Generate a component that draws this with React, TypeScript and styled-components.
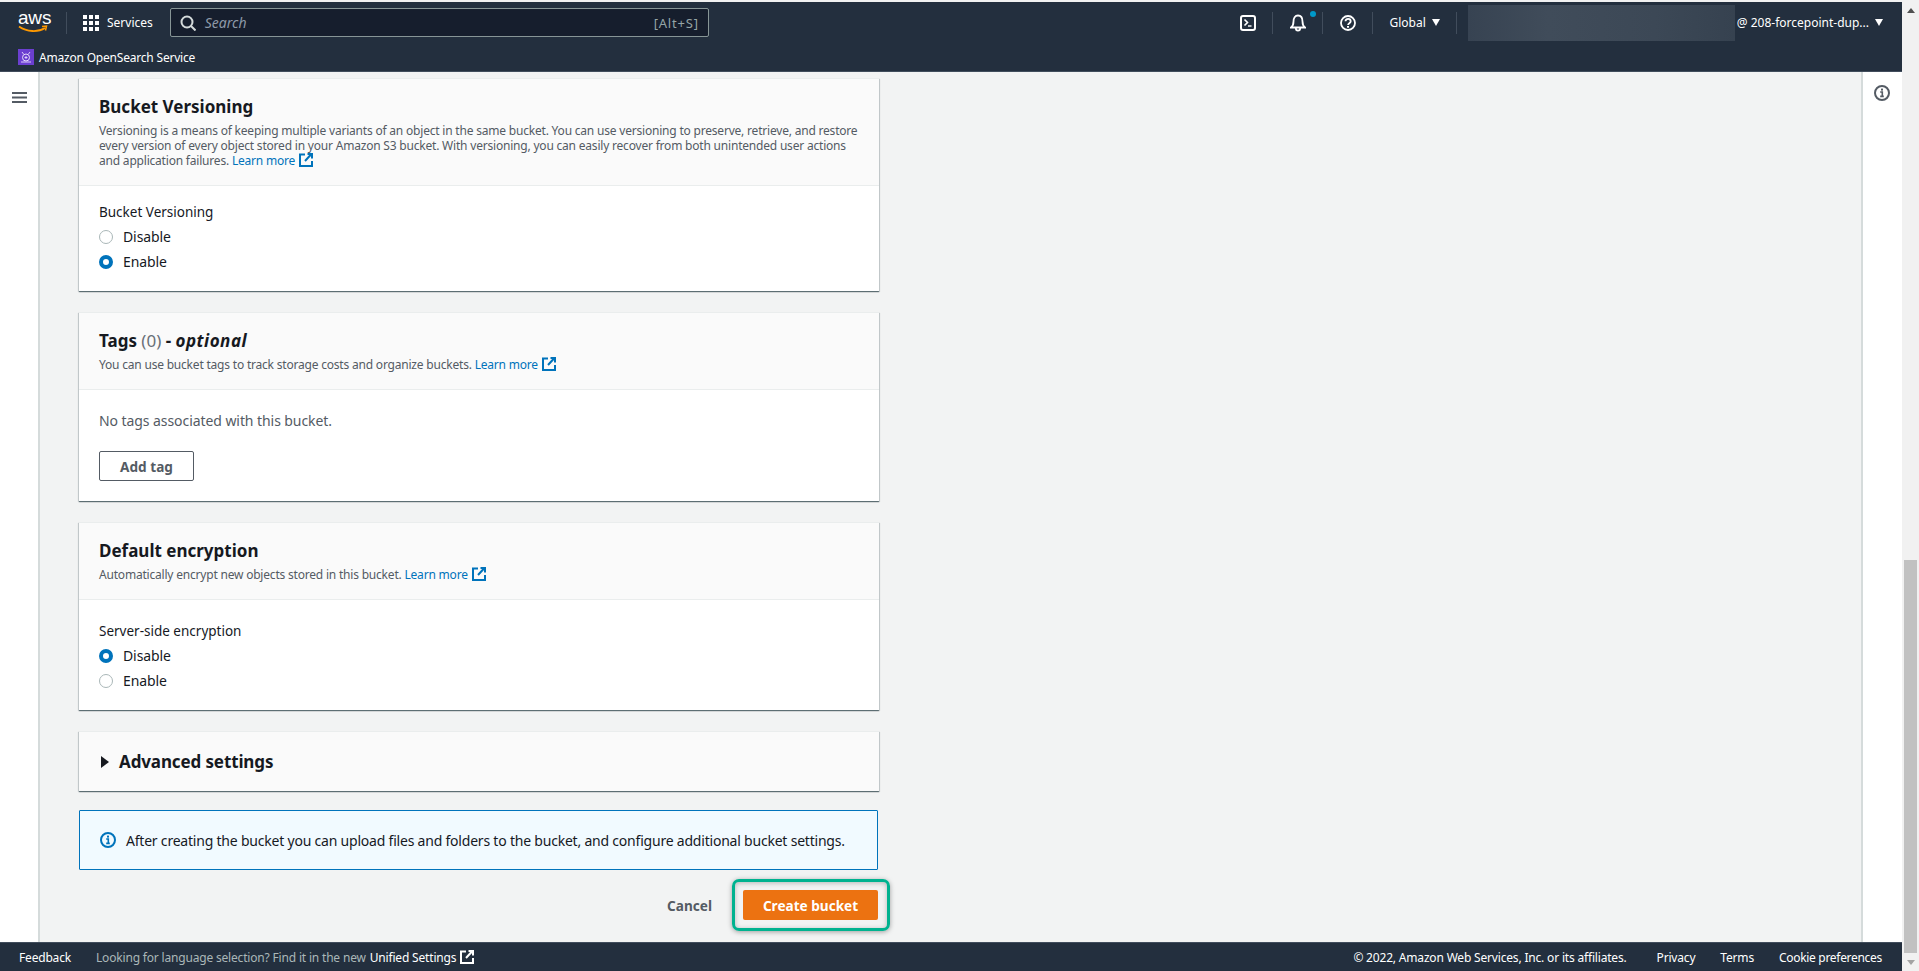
import React from "react";
import styled, { createGlobalStyle } from "styled-components";

const Global = createGlobalStyle`
  html, body { margin: 0; padding: 0; height: 100%; overflow: hidden; background: #f1f1f1; }
  #root { height: 100%; }
  * { box-sizing: border-box; }
  body { font-family: "Noto Sans", "Open Sans", Arial, sans-serif; color: #16191f; font-size: 14px; }
`;

const Shell = styled.div`
  display: flex;
  width: 1919px;
  height: 971px;
  overflow: hidden;
`;
const Page = styled.div`
  width: 1902px;
  height: 971px;
  display: flex;
  flex-direction: column;
`;
const Header = styled.header`
  height: 70px;
  margin-top: 2px;
  flex: none;
  background: #232f3e;
  border-bottom: 1px solid #414d5c;
  color: #fff;
`;
const TopRow = styled.div`
  height: 41px;
  display: flex;
  align-items: center;
  padding: 0 19px 0 18px;
`;
const ServiceRow = styled.div`
  height: 28px;
  display: flex;
  align-items: center;
  padding: 0 18px;
  gap: 5px;
  font-size: 12px;
  letter-spacing: -0.2px;
`;
const LogoBox = styled.div`
  width: 30px;
  height: 26px;
  position: relative;
  margin-right: 18px;
  flex: none;
`;
const LogoWord = styled.span`
  display: block;
  font-family: "Liberation Sans", Arial, sans-serif;
  font-size: 19px;
  line-height: 16px;
  letter-spacing: -0.2px;
  text-align: center;
  color: #fff;
`;
const Smile = styled.svg`
  position: absolute;
  left: 0;
  top: 15px;
`;
const Divider = styled.div`
  width: 1px;
  height: 22px;
  background: #414d5c;
  flex: none;
`;
const ServicesBtn = styled.div`
  display: flex;
  align-items: center;
  gap: 8px;
  margin-left: 16px;
  font-size: 12px;
  flex: none;
`;
const SearchBox = styled.div`
  width: 539px;
  height: 29px;
  margin-left: 17px;
  background: #161e2d;
  border: 1px solid #879596;
  border-radius: 2px;
  display: flex;
  align-items: center;
  padding: 0 9px 0 9px;
  gap: 9px;
  font-size: 14px;
  flex: none;
`;
const SearchText = styled.span`
  font-style: italic;
  color: #8d99a8;
  flex: 1;
`;
const Shortcut = styled.span`
  color: #95a5a6;
  font-size: 13px;
  letter-spacing: 0.8px;
`;
const RightGroup = styled.div`
  margin-left: auto;
  display: flex;
  align-items: center;
`;
const TerminalIcon = styled.svg`
  margin-right: 16px;
  flex: none;
`;
const Segment = styled.div`
  position: relative;
  display: flex;
  align-items: center;
  gap: 6px;
  padding: 0 16px 0 17px;
  font-size: 12px;
`;
const NotifyDot = styled.span`
  position: absolute;
  left: 37px;
  top: -3px;
  width: 6px;
  height: 6px;
  border-radius: 50%;
  background: #0099c9;
`;
const Redacted = styled.div`
  width: 267px;
  height: 36px;
  margin-left: 11px;
  background: linear-gradient(90deg, #374352, #404c5a 30%, #3c4856 70%, #364250);
`;
const Account = styled.div`
  display: flex;
  align-items: center;
  gap: 6px;
  margin-left: 2px;
  font-size: 12px;
  white-space: nowrap;
`;
const Caret = styled.span`
  width: 0;
  height: 0;
  border-left: 4.5px solid transparent;
  border-right: 4.5px solid transparent;
  border-top: 7px solid #fff;
`;
const Middle = styled.div`
  flex: 1;
  min-height: 0;
  display: flex;
  background: #f2f3f3;
`;
const NavRail = styled.div`
  width: 40px;
  flex: none;
  background: #fff;
  border-right: 2px solid #d5dbdb;
  padding: 16px 0 0 12px;
`;
const Main = styled.main`
  flex: 1;
  padding: 6px 0 0 39px;
  display: flex;
  flex-direction: column;
`;
const InfoRail = styled.div`
  width: 41px;
  flex: none;
  background: #fff;
  border-left: 2px solid #d5dbdb;
  padding: 13px 0 0 11px;
`;
const Card = styled.section<{ $mb?: number }>`
  width: 800px;
  background: #fff;
  flex: none;
  margin-bottom: ${(p) => p.$mb ?? 21}px;
  border-top: 1px solid #eaeded;
  box-shadow: 0 1px 1px 0 rgba(0, 28, 36, 0.5), 1px 1px 1px 0 rgba(0, 28, 36, 0.12), -1px 1px 1px 0 rgba(0, 28, 36, 0.12);
`;
const CardHead = styled.div`
  background: #fafafa;
  border-bottom: 1px solid #eaeded;
  padding: 17px 20px 17px;
`;
const Title = styled.h2`
  margin: 0;
  font-size: 17px;
  line-height: 22px;
  font-weight: 700;
  color: #16191f;
`;
const Count = styled.span`
  font-weight: 400;
  color: #687078;
`;
const Optional = styled.em`
  letter-spacing: 0.5px;
`;
const Desc = styled.p`
  margin: 5px 0 0;
  font-size: 12px;
  letter-spacing: -0.2px;
  line-height: 15px;
  color: #545b64;
`;
const Learn = styled.a`
  color: #0073bb;
`;
const Ext = styled.svg`
  vertical-align: -2px;
  margin-left: 4px;
`;
const InfoSvg = styled.svg`
  flex: none;
`;
const CardBody = styled.div<{ $top: number; $bottom: number }>`
  padding: ${(p) => p.$top}px 20px ${(p) => p.$bottom}px;
`;
const FieldLabel = styled.div`
  height: 25px;
  line-height: 27px;
  font-size: 13.5px;
  color: #16191f;
`;
const RadioRow = styled.label`
  height: 25px;
  display: flex;
  align-items: center;
  gap: 10px;
  font-size: 14px;
  letter-spacing: -0.1px;
  color: #16191f;
`;
const RadioDot = styled.span<{ $on?: boolean }>`
  width: 14px;
  height: 14px;
  border-radius: 50%;
  background: #fff;
  border: ${(p) => (p.$on ? "4px solid #0073bb" : "1px solid #aab7b8")};
  flex: none;
`;
const Empty = styled.div`
  font-size: 14px;
  letter-spacing: -0.07px;
  line-height: 20px;
  color: #545b64;
`;
const OutlineBtn = styled.button`
  display: block;
  margin-top: 20px;
  width: 95px;
  height: 30px;
  padding: 0;
  background: #fff;
  border: 1px solid #545b64;
  border-radius: 2px;
  font: 700 13.6px "Noto Sans", sans-serif;
  color: #545b64;
`;
const AdvancedRow = styled.div`
  height: 59px;
  background: #fafafa;
  display: flex;
  align-items: center;
  padding-left: 22px;
  gap: 10px;
  font-size: 17px;
  letter-spacing: -0.12px;
  font-weight: 700;
  color: #16191f;
`;
const CaretRight = styled.span`
  width: 0;
  height: 0;
  border-top: 6px solid transparent;
  border-bottom: 6px solid transparent;
  border-left: 8px solid #16191f;
`;
const Alert = styled.div`
  width: 799px;
  height: 60px;
  flex: none;
  background: #f1faff;
  border: 1px solid #0073bb;
  border-radius: 1px;
  display: flex;
  align-items: center;
  padding-left: 20px;
  gap: 10px;
  font-size: 14px;
  letter-spacing: -0.21px;
  color: #16191f;
`;
const Actions = styled.div`
  width: 799px;
  margin-top: 20px;
  display: flex;
  justify-content: flex-end;
  align-items: center;
  gap: 31px;
`;
const CancelBtn = styled.button`
  background: none;
  border: 0;
  padding: 0;
  font: 700 13.6px "Noto Sans", sans-serif;
  color: #545b64;
`;
const PrimaryWrap = styled.div`
  position: relative;
  &::after {
    content: "";
    position: absolute;
    inset: -11px -12px -11px -11px;
    border: 3px solid #00b28f;
    border-radius: 7px;
    box-shadow: 0 1px 5px rgba(0, 0, 0, 0.35), inset 0 1px 5px rgba(0, 0, 0, 0.25);
    pointer-events: none;
  }
`;
const PrimaryBtn = styled.button`
  display: block;
  width: 135px;
  height: 30px;
  padding: 0;
  background: #ec7211;
  border: 0;
  border-radius: 2px;
  color: #fff;
  font: 700 13.6px "Noto Sans", sans-serif;
`;
const Footer = styled.footer`
  height: 29px;
  flex: none;
  background: #232f3e;
  border-top: 1px solid #414d5c;
  display: flex;
  align-items: center;
  padding: 0 20px 0 19px;
  font-size: 12px;
  letter-spacing: -0.18px;
  color: #fff;
`;
const FooterMuted = styled.span`
  color: #aab7b8;
  margin-left: 25px;
  margin-right: 4px;
`;
const FooterRight = styled.div`
  margin-left: auto;
  display: flex;
  align-items: center;
  gap: 25px;
`;
const Copyright = styled.span`
  margin-right: 5px;
`;
const CookieLink = styled.span`
  letter-spacing: -0.3px;
`;
const Scrollbar = styled.div`
  width: 17px;
  height: 971px;
  flex: none;
  background: #f1f1f1;
  display: flex;
  flex-direction: column;
  align-items: center;
  padding-top: 8px;
`;
const ArrowUp = styled.span`
  width: 0;
  height: 0;
  border-left: 4px solid transparent;
  border-right: 4px solid transparent;
  border-bottom: 5px solid #505050;
`;
const Thumb = styled.div`
  width: 13px;
  height: 393px;
  margin-top: 547px;
  background: #c1c1c1;
`;
const ArrowDown = styled.span`
  width: 0;
  height: 0;
  margin-top: 7px;
  border-left: 4px solid transparent;
  border-right: 4px solid transparent;
  border-top: 5px solid #a3a3a3;
`;

const ExtIcon = ({ color = "#0073bb" }: { color?: string }) => (
  <Ext width="14" height="14" viewBox="0 0 14 14" fill="none" stroke={color} strokeWidth="2">
    <path d="M6 1.5H1v11.5h12V8" />
    <path d="M6 8l6-6.5M8.5 1H13v4.5" />
  </Ext>
);

const InfoIcon = ({ color, size = 16 }: { color: string; size?: number }) => (
  <InfoSvg width={size} height={size} viewBox="0 0 16 16" fill="none">
    <circle cx="8" cy="8" r="7" stroke={color} strokeWidth="2" />
    <rect x="7" y="3.6" width="2" height="2" fill={color} />
    <path d="M6.2 7h2.1v4M6.2 11.4h3.6" stroke={color} strokeWidth="1.6" />
  </InfoSvg>
);

const AppGrid = () => (
  <svg width="16" height="16" viewBox="0 0 16 16" fill="#fff">
    {[0, 6, 12].flatMap((y) =>
      [0, 6, 12].map((x) => <rect key={`${x}-${y}`} x={x} y={y} width="4" height="4" />)
    )}
  </svg>
);

export default function App() {
  return (
    <>
      <Global />
      <Shell>
        <Page>
          <Header>
            <TopRow>
              <LogoBox>
                <LogoWord>aws</LogoWord>
                <Smile width="30" height="10" viewBox="0 0 30 10" fill="none">
                  <path d="M1 1.5C9 7 20 7.5 27 3" stroke="#f90" strokeWidth="1.8" />
                  <path d="M24 1.5l4.5-.5-1 4.5" stroke="#f90" strokeWidth="1.5" />
                </Smile>
              </LogoBox>
              <Divider />
              <ServicesBtn>
                <AppGrid />
                Services
              </ServicesBtn>
              <SearchBox>
                <svg width="16" height="16" viewBox="0 0 16 16" fill="none" stroke="#d5dbdb" strokeWidth="2">
                  <circle cx="7" cy="7" r="5.5" />
                  <path d="M11 11l4.5 4.5" />
                </svg>
                <SearchText>Search</SearchText>
                <Shortcut>[Alt+S]</Shortcut>
              </SearchBox>
              <RightGroup>
                <TerminalIcon width="16" height="16" viewBox="0 0 16 16" fill="none" stroke="#fff" strokeWidth="2">
                  <rect x="1" y="1" width="14" height="14" rx="2" />
                  <path d="M4.5 4.5l3 3-3 3" strokeWidth="1.6" />
                  <path d="M8 11h3.5" strokeWidth="1.4" />
                </TerminalIcon>
                <Divider />
                <Segment>
                  <svg width="16" height="18" viewBox="0 0 16 18" fill="none" stroke="#fff" strokeWidth="1.8">
                    <path d="M1 13.5c2-1.5 2.5-3 2.5-6C3.500 4 5 1.500 8 1.500s4.500 2.500 4.500 6c0 3 .5 4.500 2.500 6z" />
                    <path d="M5.800 14c0 3.500 4.400 3.500 4.400 0" />
                  </svg>
                  <NotifyDot />
                </Segment>
                <Divider />
                <Segment>
                  <svg width="16" height="16" viewBox="0 0 16 16" fill="none" stroke="#fff" strokeWidth="1.8">
                    <circle cx="8" cy="8" r="7" />
                    <path d="M5.500 6.300c0-3.300 5.200-3.300 5.200 0 0 2-2.600 1.900-2.600 3.700" />
                    <path d="M7 11.800h2" strokeWidth="1.800" />
                  </svg>
                </Segment>
                <Divider />
                <Segment>
                  Global
                  <Caret />
                </Segment>
                <Divider />
                <Redacted />
                <Account>
                  @ 208-forcepoint-dup...
                  <Caret />
                </Account>
              </RightGroup>
            </TopRow>
            <ServiceRow>
              <svg width="16" height="16" viewBox="0 0 16 16" fill="none">
                <rect width="16" height="16" fill="#6b3fd0" />
                <circle cx="8" cy="8.500" r="3.500" stroke="#e8defa" strokeWidth="1" />
                <path d="M4 3l1.500 2M12 3l-1.500 2M3 13h10M8 7v3M6.500 8.500h3" stroke="#e8defa" strokeWidth="0.9" />
              </svg>
              Amazon OpenSearch Service
            </ServiceRow>
          </Header>
          <Middle>
            <NavRail>
              <svg width="15" height="11" viewBox="0 0 15 11" fill="#545b64">
                <rect width="15" height="2" />
                <rect y="4.500" width="15" height="2" />
                <rect y="9" width="15" height="2" />
              </svg>
            </NavRail>
            <Main>
              <Card>
                <CardHead>
                  <Title>Bucket Versioning</Title>
                  <Desc>
                    Versioning is a means of keeping multiple variants of an object in the same bucket. You can use versioning to preserve, retrieve, and restore
                    <br />
                    every version of every object stored in your Amazon S3 bucket. With versioning, you can easily recover from both unintended user actions
                    <br />
                    and application failures. <Learn>Learn more</Learn>
                    <ExtIcon />
                  </Desc>
                </CardHead>
                <CardBody $top={13} $bottom={17}>
                  <FieldLabel>Bucket Versioning</FieldLabel>
                  <RadioRow><RadioDot />Disable</RadioRow>
                  <RadioRow><RadioDot $on />Enable</RadioRow>
                </CardBody>
              </Card>
              <Card>
                <CardHead>
                  <Title>
                    Tags <Count>(0)</Count> - <Optional>optional</Optional>
                  </Title>
                  <Desc>
                    You can use bucket tags to track storage costs and organize buckets. <Learn>Learn more</Learn>
                    <ExtIcon />
                  </Desc>
                </CardHead>
                <CardBody $top={21} $bottom={20}>
                  <Empty>No tags associated with this bucket.</Empty>
                  <OutlineBtn>Add tag</OutlineBtn>
                </CardBody>
              </Card>
              <Card>
                <CardHead>
                  <Title>Default encryption</Title>
                  <Desc>
                    Automatically encrypt new objects stored in this bucket. <Learn>Learn more</Learn>
                    <ExtIcon />
                  </Desc>
                </CardHead>
                <CardBody $top={18} $bottom={17}>
                  <FieldLabel>Server-side encryption</FieldLabel>
                  <RadioRow><RadioDot $on />Disable</RadioRow>
                  <RadioRow><RadioDot />Enable</RadioRow>
                </CardBody>
              </Card>
              <Card $mb={19}>
                <AdvancedRow>
                  <CaretRight />
                  Advanced settings
                </AdvancedRow>
              </Card>
              <Alert>
                <InfoIcon color="#0073bb" />
                After creating the bucket you can upload files and folders to the bucket, and configure additional bucket settings.
              </Alert>
              <Actions>
                <CancelBtn>Cancel</CancelBtn>
                <PrimaryWrap>
                  <PrimaryBtn>Create bucket</PrimaryBtn>
                </PrimaryWrap>
              </Actions>
            </Main>
            <InfoRail>
              <InfoIcon color="#545b64" />
            </InfoRail>
          </Middle>
          <Footer>
            Feedback
            <FooterMuted>Looking for language selection? Find it in the new</FooterMuted>
            Unified Settings
            <ExtIcon color="#fff" />
            <FooterRight>
              <Copyright>© 2022, Amazon Web Services, Inc. or its affiliates.</Copyright>
              <span>Privacy</span>
              <span>Terms</span>
              <CookieLink>Cookie preferences</CookieLink>
            </FooterRight>
          </Footer>
        </Page>
        <Scrollbar>
          <ArrowUp />
          <Thumb />
          <ArrowDown />
        </Scrollbar>
      </Shell>
    </>
  );
}
